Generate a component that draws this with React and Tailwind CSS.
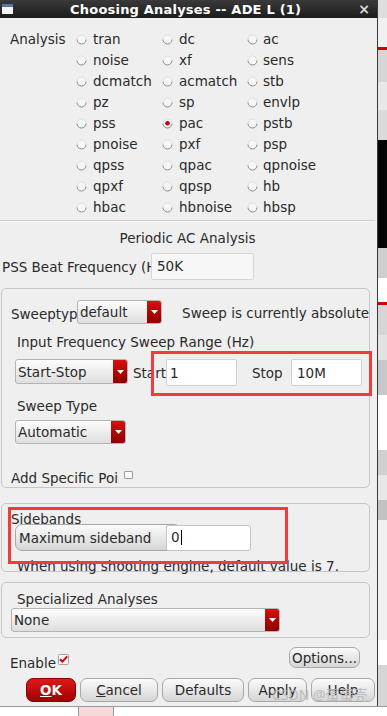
import React from "react";

const F = "font-['DejaVu_Sans',sans-serif]";

function Tri() {
  return (
    <svg width="7" height="4" viewBox="0 0 7 4">
      <path d="M0 0 L7 0 L3.5 4 Z" fill="#fff" />
    </svg>
  );
}

function Radio({ on }) {
  return (
    <svg width="11" height="11" viewBox="0 0 11 11" className="shrink-0">
      <circle cx="5.5" cy="5.5" r="4.6" fill="#f6f6f6" />
      <path d="M1 5.5 A4.5 4.5 0 0 0 10 5.5" fill="none" stroke="#8a8a8a" strokeWidth="1" />
      <path d="M1 5.5 A4.5 4.5 0 0 1 10 5.5" fill="none" stroke="#d8d8d8" strokeWidth="0.8" />
      {on && <circle cx="5.5" cy="5.2" r="2.3" fill="#d40000" />}
    </svg>
  );
}

function Combo({ label, className }) {
  return (
    <div className={"flex h-[24px] rounded-[3px] border border-[#b4b4b4] bg-gradient-to-b from-[#fdfdfd] to-[#dedede] overflow-hidden " + className}>
      <div className="flex-1 flex items-center pl-[2px] pt-[1px] whitespace-nowrap overflow-hidden">{label}</div>
      <div className="w-[14px] flex items-center justify-center bg-gradient-to-b from-[#d81010] to-[#8c0000]">
        <Tri />
      </div>
    </div>
  );
}

function Btn({ children, className }) {
  return (
    <div className={"flex items-center justify-center rounded-[7px] border border-[#a8a8a8] bg-gradient-to-b from-[#fbfbfb] to-[#d6d6d6] " + className}>
      {children}
    </div>
  );
}

const rows = [
  ["tran", "dc", "ac"],
  ["noise", "xf", "sens"],
  ["dcmatch", "acmatch", "stb"],
  ["pz", "sp", "envlp"],
  ["pss", "pac", "pstb"],
  ["pnoise", "pxf", "psp"],
  ["qpss", "qpac", "qpnoise"],
  ["qpxf", "qpsp", "hb"],
  ["hbac", "hbnoise", "hbsp"],
];

const strip = [
  [18, "#dedede"],
  [29, "#f0f0f0"],
  [3, "#d40000"],
  [32, "#d6d6d6"],
  [28, "#e8e8e8"],
  [30, "#dadada"],
  [108, "#050505"],
  [30, "#cfcfcf"],
  [24, "#ffffff"],
  [3, "#d40000"],
  [30, "#d6d6d6"],
  [25, "#e2e2e2"],
  [35, "#c8c8c8"],
  [55, "#ffffff"],
  [25, "#d0d0d0"],
  [25, "#e8e8e8"],
  [20, "#c2c2c2"],
  [120, "#f0f0f0"],
  [25, "#ffffff"],
  [41, "#d6d6d6"],
];

export default function App() {
  return (
    <div className={"w-[387px] h-[716px] overflow-hidden bg-white text-[13.5px] text-[#2a2a2a] " + F}>
      <div className="flex h-[706px]">
        {/* dialog */}
        <div className="w-[377px] flex flex-col bg-[#efefef] relative">
          {/* title bar */}
          <div className="h-[18px] flex items-center bg-gradient-to-b from-[#3a3a3a] to-[#1c1c1c] relative">
            <div className="ml-[2px] w-[11px] h-[10px] bg-[#f4f4f4] border-t-[3px] border-[#5577aa]" />
            <div className="flex-1 text-center text-white font-bold text-[13px] leading-none tracking-[0.2px]">
              Choosing Analyses -- ADE L (1)
            </div>
            <div className="mr-[7px] text-[#d8d8d8] text-[14px] leading-none font-bold">×</div>
          </div>

          {/* analysis grid */}
          <div className="pt-[11px] flex">
            <div className="w-[76px] pl-[10px] h-[21px] flex items-center">Analysis</div>
            <div className="flex flex-col">
              {rows.map((r, i) => (
                <div key={i} className="flex h-[21px] items-center">
                  <div className="w-[86px] flex items-center gap-[6px]">
                    <Radio />
                    <span>{r[0]}</span>
                  </div>
                  <div className="w-[85px] flex items-center gap-[6px]">
                    <Radio on={r[1] === "pac"} />
                    <span>{r[1]}</span>
                  </div>
                  <div className="flex items-center gap-[5px]">
                    <Radio />
                    <span>{r[2]}</span>
                  </div>
                </div>
              ))}
            </div>
          </div>

          <div className="mt-[2px] w-[375px] h-[1px] bg-[#cdcdcd]" />
          <div className="w-[375px] h-[1px] bg-[#fafafa]" />

          <div className="mt-[6px] h-[20px] flex items-center justify-center pr-[2px]">Periodic AC Analysis</div>

          <div className="mt-[5px] h-[27px] flex items-center">
            <div className="w-[151px] pl-[2px] pt-[2px] whitespace-nowrap overflow-hidden">PSS Beat Frequency (Hz)</div>
            <div className="w-[103px] h-[27px] flex items-center pl-[5px] bg-[#f7f7f7] border border-[#d6d6d6] rounded-[2px]">50K</div>
          </div>

          {/* group 1 */}
          <div className="mt-[8px] ml-[1px] w-[369px] h-[200px] border border-[#c6c6c6] rounded-[5px] flex flex-col">
            <div className="mt-[11px] h-[24px] flex items-center">
              <div className="w-[78px] pl-[9px] pt-[5px] whitespace-nowrap overflow-hidden">Sweeptype</div>
              <Combo label="default" className="w-[89px] h-[24px]" />
              <div className="ml-[20px] pt-[2px] whitespace-nowrap">Sweep is currently absolute</div>
            </div>
            <div className="mt-[7px] h-[20px] flex items-center pl-[15px] pt-[2px]">Input Frequency Sweep Range (Hz)</div>
            <div className="mt-[8px] h-[27px] flex items-start">
              <Combo label="Start-Stop" className="ml-[13px] w-[113px] h-[25px]" />
              <div className="ml-[5px] h-[27px] pt-[1px] flex items-center w-[33px] overflow-hidden whitespace-nowrap">Start</div>
              <div className="w-[71px] h-[27px] flex items-center pl-[3px] pt-[1px] bg-white border border-[#d2d2d2] rounded-[2px]">1</div>
              <div className="ml-[15px] w-[39px] h-[27px] pt-[1px] flex items-center">Stop</div>
              <div className="w-[71px] h-[27px] flex items-center pl-[5px] pt-[1px] bg-white border border-[#d2d2d2] rounded-[2px]">10M</div>
            </div>
            <div className="mt-[10px] h-[20px] flex items-center pl-[15px] pt-[1px]">Sweep Type</div>
            <Combo label="Automatic" className="mt-[4px] ml-[13px] w-[111px]" />
            <div className="mt-[26px] h-[16px] flex items-center pl-[9px] pt-[1px]">
              <span className="w-[108px] whitespace-nowrap overflow-hidden">Add Specific Points</span>
              <div className="ml-[5px] mb-[7px] w-[9px] h-[8px] bg-[#f8f8f8] border border-[#9a9a9a] rounded-[1px]" />
            </div>
          </div>

          {/* group 2 */}
          <div className="mt-[15px] ml-[1px] w-[369px] h-[69px] border border-[#c6c6c6] rounded-[5px] flex flex-col">
            <div className="mt-[6px] h-[18px] flex items-center pl-[9px]">Sidebands</div>
            <div className="-mt-[4px] h-[27px] flex items-center">
              <Btn className="ml-[13px] w-[166px] h-[27px] rounded-[4px] justify-start pl-[3px] pt-[1px]">
                <span>Maximum sideband</span>
              </Btn>
              <div className="-ml-[15px] w-[85px] h-[26px] flex items-center pl-[4px] bg-white border border-[#c4c4c4] rounded-[2px] relative">
                0<span className="inline-block w-[1px] h-[15px] bg-black ml-[1px]" />
              </div>
            </div>
            <div className="mt-[7px] h-[16px] flex items-center pl-[15px] whitespace-nowrap">
              When using shooting engine, default value is 7.
            </div>
          </div>

          {/* group 3 */}
          <div className="mt-[10px] ml-[1px] w-[369px] h-[56px] border border-[#c6c6c6] rounded-[5px] flex flex-col">
            <div className="mt-[8px] h-[17px] flex items-center pl-[15px]">Specialized Analyses</div>
            <Combo label="None" className="ml-[9px] w-[269px]" />
          </div>

          {/* enable row */}
          <div className="mt-[9px] h-[21px] flex items-center">
            <div className="pl-[10px] mt-[12px] flex items-center">
              <span>Enable</span>
              <svg width="11" height="11" viewBox="0 0 11 11" className="ml-[2px] mb-[8px]">
                <rect x="0.5" y="0.5" width="10" height="10" rx="1" fill="#f8f8f8" stroke="#a0a0a0" />
                <path d="M2 5.2 L4.4 7.6 L9.2 2.4" fill="none" stroke="#d40000" strokeWidth="2" />
              </svg>
            </div>
            <Btn className="ml-auto mr-[17px] w-[71px] h-[21px] pt-[1px]">Options...</Btn>
          </div>

          {/* buttons */}
          <div className="mt-[10px] h-[24px] flex items-center">
            <div className="ml-[26px] w-[50px] h-[24px] rounded-[7px] bg-gradient-to-b from-[#e01818] to-[#a00000] border border-[#8a0000] flex items-center justify-center text-white font-bold pt-[1px]">
              <span><span className="underline">O</span>K</span>
            </div>
            <Btn className="ml-[4px] w-[78px] h-[24px] pt-[1px]"><span><span className="underline">C</span>ancel</span></Btn>
            <Btn className="ml-[4px] w-[82px] h-[24px] pt-[1px]">Defaults</Btn>
            <Btn className="ml-[4px] w-[59px] h-[24px] pt-[1px]">Apply</Btn>
            <Btn className="ml-[4px] w-[64px] h-[24px] pt-[1px]">Help</Btn>
          </div>

          {/* annotations */}
          <div className="absolute left-[151px] top-[351px] w-[221px] h-[45px] border-[3px] border-[#f23c3c]" />
          <div className="absolute left-[8px] top-[507px] w-[280px] h-[57px] border-[3px] border-[#f23c3c]" />
          <div className="absolute left-[272px] top-[684px] text-[14px] text-[#b8b8b8] whitespace-nowrap font-['Noto_Sans','Noto_Sans_CJK_SC',sans-serif] opacity-90">
            CSDN @蛋蛋壳
          </div>
        </div>

        {/* right border */}
        <div className="w-[1px] bg-[#3a3a3a]" />
        {/* background strip */}
        <div className="flex-1 flex flex-col">
          {strip.map(([h, c], i) => (
            <div key={i} style={{ height: h, backgroundColor: c }} />
          ))}
        </div>
      </div>
      {/* bottom background */}
      <div className="h-[10px] flex border-t border-[#9a9a9a]">
        <div className="w-[78px] bg-white" />
        <div className="w-[1px] bg-[#9a9a9a]" />
        <div className="w-[34px] bg-[#f6dada]" />
        <div className="w-[1px] bg-[#9a9a9a]" />
        <div className="flex-1 bg-white" />
      </div>
    </div>
  );
}
